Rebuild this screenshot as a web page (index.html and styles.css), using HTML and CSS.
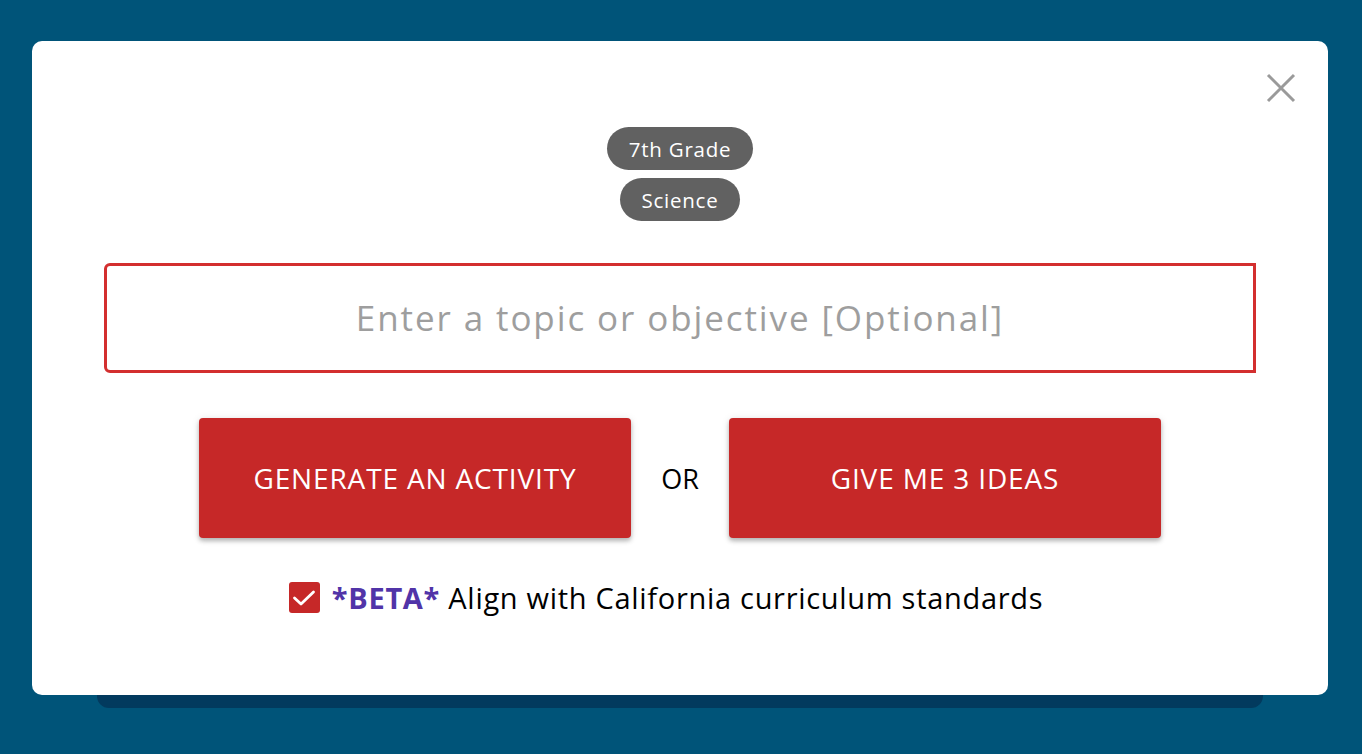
FILE: index.html
```html
<!DOCTYPE html>
<html lang="en">
<head>
<meta charset="utf-8">
<title>Activity generator</title>
<link rel="stylesheet" href="styles.css">
</head>
<body>
<div class="stage">
  <div class="modal">
    <button class="close" aria-label="Close">
      <svg width="30" height="30" viewBox="0 0 30 30"><path d="M2 2 L28 28 M28 2 L2 28" stroke="#9a9a9a" stroke-width="3" fill="none"/></svg>
    </button>
    <div class="chips">
      <span class="chip">7th Grade</span>
      <span class="chip">Science</span>
    </div>
    <div class="topic">
      <span class="placeholder">Enter a topic or objective [Optional]</span>
    </div>
    <div class="actions">
      <button class="btn">GENERATE AN ACTIVITY</button>
      <span class="or">OR</span>
      <button class="btn">GIVE ME 3 IDEAS</button>
    </div>
    <label class="check-row">
      <span class="checkbox">
        <svg width="24" height="18" viewBox="0 0 24 18"><path d="M2.5 9 L9 15 L21.5 3" stroke="#fff" stroke-width="2.8" fill="none" stroke-linecap="round" stroke-linejoin="round"/></svg>
      </span>
      <span class="check-text"><b class="beta">*BETA*</b> Align with California curriculum standards</span>
    </label>
  </div>
  <div class="under"></div>
</div>
</body>
</html>
```
FILE: styles.css
```css
* { box-sizing: border-box; }
html, body { margin: 0; padding: 0; }
body {
  background: #005479;
  width: 1362px;
  height: 754px;
  overflow: hidden;
  font-family: "Open Sans", "Liberation Sans", sans-serif;
}
.stage {
  padding: 41px 34px 0 32px;
}
.modal {
  position: relative;
  width: 1296px;
  height: 654px;
  background: #fff;
  border-radius: 10px;
  padding: 86px 72px 0 72px;
  display: flex;
  flex-direction: column;
  align-items: center;
}
.under {
  margin-left: 65px;
  width: 1166px;
  height: 13px;
  background: #023a5e;
  border-radius: 0 0 12px 12px;
}
.close {
  position: absolute;
  top: 32px;
  right: 32px;
  width: 30px;
  height: 30px;
  padding: 0;
  border: 0;
  background: none;
  display: flex;
}
.chips {
  display: flex;
  flex-direction: column;
  align-items: center;
  gap: 8px;
}
.chip {
  height: 43px;
  padding: 0 22px;
  border-radius: 22px;
  background: #616161;
  color: #fff;
  font-size: 20.5px;
  letter-spacing: 0.75px;
  display: flex;
  align-items: center;
}
.topic {
  margin-top: 42px;
  width: 1152px;
  height: 110px;
  border: 3px solid #d32f2f;
  border-radius: 6px 0 0 6px;
  display: flex;
  align-items: center;
  justify-content: center;
}
.placeholder {
  color: #9e9e9e;
  font-size: 35px;
  letter-spacing: 1.9px;
  padding-bottom: 2px;
}
.actions {
  margin-top: 45px;
  display: flex;
  align-items: center;
  gap: 30px;
}
.btn {
  width: 432px;
  height: 120px;
  border: 0;
  border-radius: 4px;
  background: #c62828;
  color: #fff;
  font-family: inherit;
  font-size: 28px;
  font-weight: 500;
  letter-spacing: 0.85px;
  box-shadow: 0 3px 4px rgba(0,0,0,0.25), 0 1px 8px rgba(0,0,0,0.1);
}
.or {
  width: 38px;
  text-align: center;
  font-size: 27px;
  color: #000;
}
.check-row {
  margin-top: 40px;
  margin-right: 28px;
  display: flex;
  align-items: center;
  gap: 12px;
}
.checkbox {
  width: 31px;
  height: 31px;
  border-radius: 3px;
  background: #c62828;
  display: flex;
  align-items: center;
  justify-content: center;
}
.check-text {
  font-size: 29px;
  letter-spacing: 0.7px;
  color: #000;
}
.beta {
  color: #5134a8;
  font-weight: 700;
}
```
